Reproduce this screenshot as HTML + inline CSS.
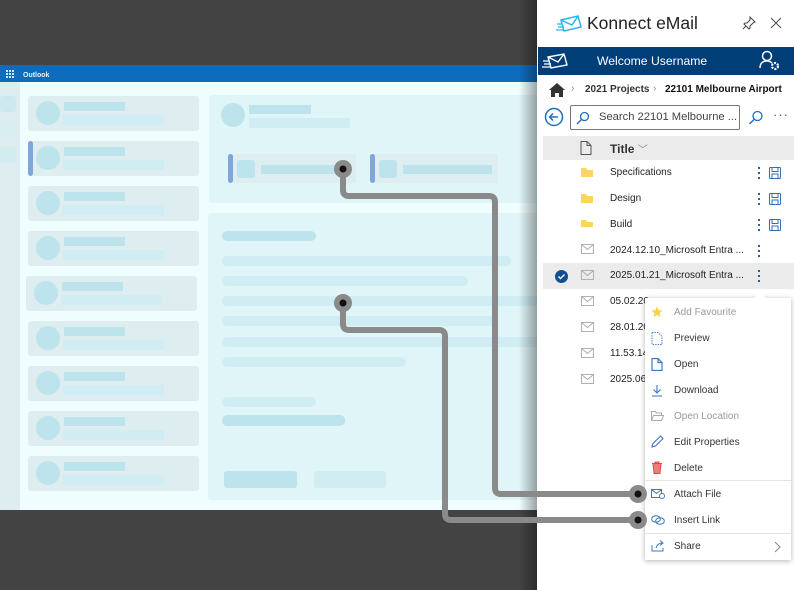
<!DOCTYPE html>
<html><head><meta charset="utf-8"><style>
*{margin:0;padding:0;box-sizing:border-box}
body{width:794px;height:590px;background:#434343;position:relative;overflow:hidden;font-family:"Liberation Sans",sans-serif}
.abs{position:absolute}
#panel{left:537px;top:0;width:257px;height:590px;background:#fff;font-size:10px;color:#222}
.t{position:absolute;white-space:nowrap}
.menu{position:absolute;left:645px;top:298px;width:146px;height:262px;background:#fff;box-shadow:0 1px 5px rgba(0,0,0,.3);font-size:10px;color:#333}
.mi{position:absolute;left:29px;white-space:nowrap}
.ic{position:absolute;left:6px}
</style></head><body>
<svg class="abs" style="left:0;top:0" width="537" height="590">
<defs><linearGradient id="sh" x1="0" x2="1"><stop offset="0" stop-color="#000" stop-opacity="0"/><stop offset="1" stop-color="#000" stop-opacity=".35"/></linearGradient></defs>
<rect x="0" y="65" width="537" height="445" fill="#effdff"/>
<rect x="0" y="65" width="537" height="17" fill="#0f6cbd"/>
<g fill="#cfe6f5"><rect x="6" y="70" width="2" height="2"/><rect x="9" y="70" width="2" height="2"/><rect x="12" y="70" width="2" height="2"/><rect x="6" y="73" width="2" height="2"/><rect x="9" y="73" width="2" height="2"/><rect x="12" y="73" width="2" height="2"/><rect x="6" y="76" width="2" height="2"/><rect x="9" y="76" width="2" height="2"/><rect x="12" y="76" width="2" height="2"/></g>
<text x="23" y="77" font-size="7" font-weight="bold" fill="#e6f2fb" font-family="Liberation Sans">Outlook</text>
<rect x="0" y="82" width="20" height="428" fill="#deedf0"/>
<rect x="0" y="96" width="16" height="16" rx="3" fill="#cfeaef"/>
<rect x="0" y="121" width="16" height="16" rx="3" fill="#d8eff2"/>
<rect x="0" y="147" width="16" height="16" rx="3" fill="#d3ecf0"/>
<g>
<g transform="translate(28,96)"><rect width="171" height="35" rx="3" fill="#deedf0"/><circle cx="20" cy="17" r="12" fill="#bde4ec"/><rect x="36" y="6" width="61" height="9" fill="#bde4ec"/><rect x="35" y="19" width="101" height="10" fill="#cfedf2"/></g>
<g transform="translate(28,141)"><rect width="171" height="35" rx="3" fill="#deedf0"/><rect x="0" y="0" width="5" height="35" rx="2.5" fill="#7fa6d8"/><circle cx="20" cy="17" r="12" fill="#bde4ec"/><rect x="36" y="6" width="61" height="9" fill="#bde4ec"/><rect x="35" y="19" width="101" height="10" fill="#cfedf2"/></g>
<g transform="translate(28,186)"><rect width="171" height="35" rx="3" fill="#deedf0"/><circle cx="20" cy="17" r="12" fill="#bde4ec"/><rect x="36" y="6" width="61" height="9" fill="#bde4ec"/><rect x="35" y="19" width="101" height="10" fill="#cfedf2"/></g>
<g transform="translate(28,231)"><rect width="171" height="35" rx="3" fill="#deedf0"/><circle cx="20" cy="17" r="12" fill="#bde4ec"/><rect x="36" y="6" width="61" height="9" fill="#bde4ec"/><rect x="35" y="19" width="101" height="10" fill="#cfedf2"/></g>
<g transform="translate(26,276)"><rect width="171" height="35" rx="3" fill="#deedf0"/><circle cx="20" cy="17" r="12" fill="#bde4ec"/><rect x="36" y="6" width="61" height="9" fill="#bde4ec"/><rect x="35" y="19" width="101" height="10" fill="#cfedf2"/></g>
<g transform="translate(28,321)"><rect width="171" height="35" rx="3" fill="#deedf0"/><circle cx="20" cy="17" r="12" fill="#bde4ec"/><rect x="36" y="6" width="61" height="9" fill="#bde4ec"/><rect x="35" y="19" width="101" height="10" fill="#cfedf2"/></g>
<g transform="translate(28,366)"><rect width="171" height="35" rx="3" fill="#deedf0"/><circle cx="20" cy="17" r="12" fill="#bde4ec"/><rect x="36" y="6" width="61" height="9" fill="#bde4ec"/><rect x="35" y="19" width="101" height="10" fill="#cfedf2"/></g>
<g transform="translate(28,411)"><rect width="171" height="35" rx="3" fill="#deedf0"/><circle cx="20" cy="17" r="12" fill="#bde4ec"/><rect x="36" y="6" width="61" height="9" fill="#bde4ec"/><rect x="35" y="19" width="101" height="10" fill="#cfedf2"/></g>
<g transform="translate(28,456)"><rect width="171" height="35" rx="3" fill="#deedf0"/><circle cx="20" cy="17" r="12" fill="#bde4ec"/><rect x="36" y="6" width="61" height="9" fill="#bde4ec"/><rect x="35" y="19" width="101" height="10" fill="#cfedf2"/></g>
</g>
<rect x="209" y="95" width="340" height="108" rx="3" fill="#e0f5f8"/>
<circle cx="233" cy="115" r="12" fill="#bde4ec"/>
<rect x="249" y="105" width="62" height="9" fill="#bde4ec"/>
<rect x="249" y="118" width="101" height="10" fill="#cfedf2"/>
<rect x="230" y="154" width="126" height="29" fill="#deedf0"/><rect x="228" y="154" width="5" height="29" rx="2.5" fill="#7fa6d8"/><rect x="237" y="160" width="18" height="18" rx="3" fill="#bde4ec"/><rect x="261" y="165" width="75" height="9" fill="#bde4ec"/>
<rect x="372" y="154" width="126" height="29" fill="#deedf0"/><rect x="370" y="154" width="5" height="29" rx="2.5" fill="#7fa6d8"/><rect x="379" y="160" width="18" height="18" rx="3" fill="#bde4ec"/><rect x="403" y="165" width="89" height="9" fill="#bde4ec"/>
<rect x="208" y="213" width="340" height="287" rx="3" fill="#e0f5f8"/>
<rect x="222" y="231" width="94" height="10" rx="5" fill="#bde4ec"/>
<g fill="#cfedf2"><rect x="222" y="256" width="289" height="10" rx="5"/><rect x="222" y="276" width="246" height="10" rx="5"/><rect x="222" y="296" width="320" height="10" rx="5"/><rect x="222" y="316" width="273" height="10" rx="5"/><rect x="222" y="337" width="320" height="10" rx="5"/><rect x="222" y="357" width="184" height="10" rx="5"/><rect x="222" y="397" width="94" height="10" rx="5"/></g>
<rect x="222" y="415" width="123" height="11" rx="5" fill="#bde4ec"/>
<rect x="224" y="471" width="73" height="17" rx="3" fill="#bde4ec"/>
<rect x="314" y="471" width="72" height="17" rx="3" fill="#cfedf2"/>
<rect x="519" y="0" width="18" height="590" fill="url(#sh)"/>
</svg>
<div id="panel" class="abs">
<svg class="abs" style="left:19px;top:15px" width="26" height="18" viewBox="0 0 26 18"><path d="M5 5 L22 1 L25 12 L8 16 Z M5 5 L16 10 L22 1" fill="none" stroke="#29b6e8" stroke-width="1.5"/><path d="M1 9h5M2 12h6M0 15h7" stroke="#29b6e8" stroke-width="1.3"/></svg>
<div class="t" style="left:50px;top:13px;font-size:17.5px;color:#222">Konnect eMail</div>
<svg class="abs" style="left:205px;top:16px" width="14" height="14"><path d="M8 1l5 5-2 1-3 3 0 2-1 1-5-5 1-1h2l3-3z M4 10L1 13" fill="none" stroke="#444" stroke-width="1"/></svg>
<svg class="abs" style="left:233px;top:17px" width="12" height="12"><path d="M1 1l10 10M11 1L1 11" stroke="#555" stroke-width="1.1"/></svg>
<div class="abs" style="left:1px;top:47px;width:256px;height:28px;background:#003e78"></div>
<svg class="abs" style="left:5px;top:52px" width="28" height="18" viewBox="0 0 28 18"><path d="M6 5 L22 2 L25 13 L9 16 Z M6 5 L16 10 L22 2" fill="none" stroke="#fff" stroke-width="1.4"/><path d="M1 9h6M2 12h7M0 15h8" stroke="#fff" stroke-width="1.2"/></svg>
<div class="t" style="left:60px;top:54px;font-size:12.2px;color:#fff">Welcome Username</div>
<svg class="abs" style="left:222px;top:50px" width="22" height="22"><circle cx="8" cy="6" r="4.5" fill="none" stroke="#fff" stroke-width="1.5"/><path d="M1 18c0-5 3-7 7-7 3 0 4 1 5 2" fill="none" stroke="#fff" stroke-width="1.5"/><circle cx="16" cy="16" r="3" fill="none" stroke="#fff" stroke-width="2.2" stroke-dasharray="2 1.2"/></svg>
<svg class="abs" style="left:11px;top:82px" width="18" height="16"><path d="M9 1L1 8h2v7h4v-4h4v4h4V8h2z" fill="#333"/></svg>
<div class="t" style="left:34px;top:83px;color:#888;font-size:10px">›</div>
<div class="t" style="left:48px;top:84px;font-size:10px;font-weight:bold;color:#333">2021 Projects</div>
<div class="t" style="left:116px;top:83px;color:#888;font-size:10px">›</div>
<div class="t" style="left:128px;top:84px;font-size:10px;font-weight:bold;color:#111">22101 Melbourne Airport</div>
<svg class="abs" style="left:7px;top:107px" width="20" height="20"><circle cx="10" cy="10" r="8.5" fill="none" stroke="#1b6fc2" stroke-width="1.5"/><path d="M14 10H6M9 6.5L5.5 10 9 13.5" fill="none" stroke="#1b6fc2" stroke-width="1.5"/></svg>
<div class="abs" style="left:33px;top:105px;width:170px;height:25px;border:1px solid #777;border-radius:2px"></div>
<svg class="abs" style="left:39px;top:111px" width="14" height="14"><circle cx="8.5" cy="5.5" r="4" fill="none" stroke="#1b6fc2" stroke-width="1.3"/><path d="M5.5 8.5L1 13" stroke="#1b6fc2" stroke-width="1.4"/></svg>
<div class="t" style="left:62px;top:111px;font-size:11.2px;color:#444">Search 22101 Melbourne ...</div>
<svg class="abs" style="left:211px;top:110px" width="16" height="16"><circle cx="9.5" cy="6" r="4.5" fill="none" stroke="#1b6fc2" stroke-width="1.3"/><path d="M6 9.5L1.5 14" stroke="#1b6fc2" stroke-width="1.4"/></svg>
<div class="t" style="left:236px;top:107px;font-size:13px;color:#1b6fc2;letter-spacing:1px">···</div>
<div class="abs" style="left:6px;top:136px;width:251px;height:24px;background:#ebebeb"></div>
<svg class="abs" style="left:43px;top:141px" width="12" height="14"><path d="M1 .5h6l4 4v9H1z M7 .5v4h4" fill="none" stroke="#555"/></svg>
<div class="t" style="left:73px;top:141px;font-size:12px;font-weight:bold;color:#333">Title <span style="font-weight:normal;color:#888;font-size:10px">﹀</span></div>

<div class="abs" style="left:6px;top:263px;width:251px;height:26px;background:#ebebeb"></div>
<div class="abs" style="left:18px;top:270px;width:13px;height:13px;border-radius:50%;background:#0f4f95"></div>
<svg class="abs" style="left:18px;top:270px" width="13" height="13"><path d="M3.5 6.5l2 2 4-4" fill="none" stroke="#fff" stroke-width="1.4"/></svg>

<svg class="abs" style="left:44px;top:167px" width="13" height="60"><g fill="#fcd65c"><path d="M0 1h5l1 2h6v7H0z"/><path d="M0 27h5l1 2h6v7H0z"/><path d="M0 53h5l1 2h6v6H0z"/></g></svg>
<div class="t" style="left:73px;top:167px">Specifications</div>
<div class="t" style="left:73px;top:193px">Design</div>
<div class="t" style="left:73px;top:219px">Build</div>
<div class="t" style="left:73px;top:245px">2024.12.10_Microsoft Entra ...</div>
<div class="t" style="left:73px;top:270px">2025.01.21_Microsoft Entra ...</div>
<div class="t" style="left:73px;top:296px">05.02.20</div>
<div class="t" style="left:73px;top:322px">28.01.20</div>
<div class="t" style="left:73px;top:348px">11.53.14_</div>
<div class="t" style="left:73px;top:374px">2025.06</div>
<svg class="abs" style="left:44px;top:244px" width="14" height="140"><g fill="none" stroke="#aaa" stroke-width=".9"><rect x=".5" y=".5" width="12" height="9"/><path d="M.5 .5l6 5 6-5"/><rect x=".5" y="26.5" width="12" height="9"/><path d="M.5 26.5l6 5 6-5"/><rect x=".5" y="52.5" width="12" height="9"/><path d="M.5 52.5l6 5 6-5"/><rect x=".5" y="78.5" width="12" height="9"/><path d="M.5 78.5l6 5 6-5"/><rect x=".5" y="104.5" width="12" height="9"/><path d="M.5 104.5l6 5 6-5"/><rect x=".5" y="130.5" width="12" height="9"/><path d="M.5 130.5l6 5 6-5"/></g></svg>
<svg class="abs" style="left:220px;top:166px" width="30" height="120"><g fill="#1b4f8a"><circle cx="2" cy="2" r="1.1"/><circle cx="2" cy="7" r="1.1"/><circle cx="2" cy="12" r="1.1"/><circle cx="2" cy="28" r="1.1"/><circle cx="2" cy="33" r="1.1"/><circle cx="2" cy="38" r="1.1"/><circle cx="2" cy="54" r="1.1"/><circle cx="2" cy="59" r="1.1"/><circle cx="2" cy="64" r="1.1"/><circle cx="2" cy="80" r="1.1"/><circle cx="2" cy="85" r="1.1"/><circle cx="2" cy="90" r="1.1"/><circle cx="2" cy="105" r="1.1"/><circle cx="2" cy="110" r="1.1"/><circle cx="2" cy="115" r="1.1"/></g>
<g fill="none" stroke="#2f6fb3" stroke-width="1"><rect x="12.5" y="1.5" width="11" height="11" rx="1"/><rect x="15" y="1.5" width="6" height="4"/><rect x="15" y="8" width="6" height="4.5"/><rect x="12.5" y="27.5" width="11" height="11" rx="1"/><rect x="15" y="27.5" width="6" height="4"/><rect x="15" y="34" width="6" height="4.5"/><rect x="12.5" y="53.5" width="11" height="11" rx="1"/><rect x="15" y="53.5" width="6" height="4"/><rect x="15" y="60" width="6" height="4.5"/></g></svg>
</div>

<div class="menu">
<svg class="abs" style="left:108px;top:-6px" width="14" height="7"><path d="M0 7L7 0l7 7z" fill="#fff"/></svg>
<svg class="ic" style="top:8px" width="12" height="12"><path d="M6 .5l1.6 3.7 4 .3-3 2.6 1 3.9L6 9 2.4 11l1-3.9-3-2.6 4-.3z" fill="#f6d34a"/></svg>
<div class="mi" style="top:9px;color:#999">Add Favourite</div>
<svg class="ic" style="top:34px" width="12" height="13"><path d="M1 .5h6l4 4v8H1z" fill="none" stroke="#4a86c7" stroke-dasharray="1.5 1"/></svg>
<div class="mi" style="top:35px">Preview</div>
<svg class="ic" style="top:60px" width="12" height="13"><path d="M1 .5h6l4 4v8H1z M7 .5v4h4" fill="none" stroke="#3a78c0" stroke-width="1.2"/></svg>
<div class="mi" style="top:61px">Open</div>
<svg class="ic" style="top:86px" width="12" height="13"><path d="M6 1v8M2.5 5.5L6 9l3.5-3.5M1 12h10" fill="none" stroke="#3a78c0" stroke-width="1.1"/></svg>
<div class="mi" style="top:87px">Download</div>
<svg class="ic" style="top:112px" width="13" height="12"><path d="M.5 10.5V1.5h4l1 1.5h5v2M.5 10.5l2-5h10l-2 5z" fill="none" stroke="#aaa"/></svg>
<div class="mi" style="top:113px;color:#999">Open Location</div>
<svg class="ic" style="top:137px" width="13" height="13"><path d="M1 12l1-3.5L9.5 1 12 3.5 4.5 11z" fill="none" stroke="#3a78c0" stroke-width="1.1"/></svg>
<div class="mi" style="top:139px">Edit Properties</div>
<svg class="ic" style="top:163px" width="12" height="13"><path d="M1 2.5h10M4 2.5V1h4v1.5M2 2.5l1 10h6l1-10z" fill="#f47a7a" stroke="#e04848"/></svg>
<div class="mi" style="top:165px">Delete</div>
<div class="abs" style="left:0;top:182px;width:146px;height:1px;background:#e3e3e3"></div>
<svg class="ic" style="top:190px" width="14" height="12"><rect x=".5" y="1.5" width="10" height="8" fill="none" stroke="#3a78c0"/><path d="M.5 1.5l5 4 5-4" fill="none" stroke="#3a78c0"/><circle cx="11" cy="8" r="2.5" fill="#fff" stroke="#3a78c0"/></svg>
<div class="mi" style="top:191px">Attach File</div>
<svg class="ic" style="top:216px" width="14" height="12"><ellipse cx="5" cy="5" rx="4.3" ry="3.3" fill="none" stroke="#3a78c0"/><ellipse cx="9" cy="7" rx="4.3" ry="3.3" fill="none" stroke="#3a78c0"/></svg>
<div class="mi" style="top:217px">Insert Link</div>
<div class="abs" style="left:0;top:235px;width:146px;height:1px;background:#e3e3e3"></div>
<svg class="ic" style="top:242px" width="14" height="12"><path d="M1 5v6h11V8M5 8c1-4 4-5 7-5M9 .5L12 3 9 5.5" fill="none" stroke="#3a78c0"/></svg>
<div class="mi" style="top:243px">Share</div>
<svg class="abs" style="left:129px;top:243px" width="8" height="12"><path d="M1 1l5 5-5 5" fill="none" stroke="#888"/></svg>
</div>

<svg class="abs" style="left:0;top:0" width="794" height="590">
<g fill="none" stroke="#8a8a8a" stroke-width="6" stroke-linejoin="round">
<path d="M343 169 V190 Q343 196 349 196 H489 Q495 196 495 202 V488 Q495 494 501 494 H638"/>
<path d="M343 303 V324 Q343 330 349 330 H439 Q445 330 445 336 V514 Q445 520 451 520 H638"/>
</g>
<g fill="#8a8a8a"><circle cx="343" cy="169" r="9"/><circle cx="343" cy="303" r="9"/><circle cx="638" cy="494" r="9"/><circle cx="638" cy="520" r="9"/></g>
<g fill="#111"><circle cx="343" cy="169" r="3.5"/><circle cx="343" cy="303" r="3.5"/><circle cx="638" cy="494" r="3.5"/><circle cx="638" cy="520" r="3.5"/></g>
</svg>
</body></html>
